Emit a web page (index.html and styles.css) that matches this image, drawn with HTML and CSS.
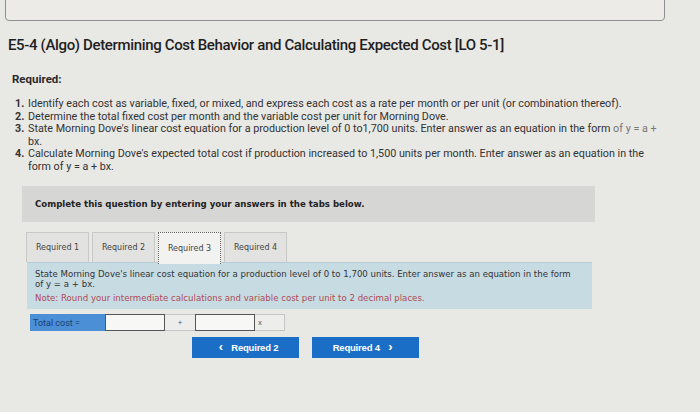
FILE: index.html
```html
<!DOCTYPE html>
<html>
<head>
<meta charset="utf-8">
<link rel="stylesheet" href="styles.css">
</head>
<body>
<div class="page">
  <div class="topbox"></div>
  <h1 class="title">E5-4 (Algo) Determining Cost Behavior and Calculating Expected Cost [LO 5-1]</h1>
  <p class="req">Required:</p>
  <ol class="steps">
    <li><b>1.</b><span>Identify each cost as variable, fixed, or mixed, and express each cost as a rate per month or per unit (or combination thereof).</span></li>
    <li><b>2.</b><span>Determine the total fixed cost per month and the variable cost per unit for Morning Dove.</span></li>
    <li><b>3.</b><span>State Morning Dove's linear cost equation for a production level of 0 to1,700 units. Enter answer as an equation in the form <i class="faint">of y = a +</i><br>bx.</span></li>
    <li><b>4.</b><span>Calculate Morning Dove's expected total cost if production increased to 1,500 units per month. Enter answer as an equation in the<br>form of y = a + bx.</span></li>
  </ol>
  <div class="instr">Complete this question by entering your answers in the tabs below.</div>
  <div class="tabs">
    <div class="tab">Required 1</div>
    <div class="tab">Required 2</div>
    <div class="tab active">Required 3</div>
    <div class="tab">Required 4</div>
  </div>
  <div class="panel">
    <p>State Morning Dove's linear cost equation for a production level of 0 to 1,700 units. Enter answer as an equation in the form<br>of y = a + bx.</p>
    <p class="note">Note: Round your intermediate calculations and variable cost per unit to 2 decimal places.</p>
  </div>
  <div class="answer">
    <div class="label">Total cost =</div>
    <div class="input"></div>
    <div class="op">+</div>
    <div class="input"></div>
    <div class="op x">x</div>
  </div>
  <div class="nav">
    <button class="btn"><span class="chev">&lsaquo;</span> Required 2</button>
    <button class="btn">Required 4 <span class="chev">&rsaquo;</span></button>
  </div>
</div>
</body>
</html>
```
FILE: styles.css
```css
html, body {
  margin: 0;
  padding: 0;
}
body {
  background: #e8e8e5;
  width: 700px;
  height: 412px;
  overflow: hidden;
  font-family: Roboto, "Liberation Sans", sans-serif;
  color: #2a2a2a;
}
.topbox {
  margin: -10px 35px 0 5px;
  height: 29px;
  border: 1px solid #8f8f93;
  border-radius: 4px;
  background: #ecebe8;
}
.title {
  margin: 15px 0 0 8px;
  font-size: 15px;
  font-weight: 500;
  letter-spacing: -0.35px;
  color: #1f1f22;
  line-height: 18px;
}
.req {
  margin: 18px 0 0 12px;
  font-size: 11.5px;
  font-weight: 700;
  color: #2a2a2a;
}
.steps {
  list-style: none;
  margin: 12px 0 0 15px;
  padding: 0;
  font-size: 10.75px;
  line-height: 12.5px;
  color: #333;
}
.steps li {
  display: flex;
  gap: 3px;
}
.steps b {
  width: 10px;
  flex: none;
}
.faint {
  font-style: normal;
  color: #777;
}
.instr {
  margin: 13px 105px 0 22px;
  height: 36px;
  background: #d6d6d4;
  display: flex;
  align-items: center;
  padding-left: 13px;
  font-family: "DejaVu Sans", Verdana, sans-serif;
  font-weight: 700;
  font-size: 8.6px;
  color: #222;
}
.tabs {
  display: flex;
  gap: 3px;
  margin: 10px 0 0 26px;
  height: 30px;
}
.tab {
  width: 61px;
  background: #e2e2e0;
  border: 1px solid #c8c8c6;
  border-bottom: none;
  display: flex;
  align-items: center;
  justify-content: center;
  font-family: "DejaVu Sans", Verdana, sans-serif;
  font-size: 8px;
  color: #444;
}
.tab.active {
  background: #f2f2f0;
  border: 1px dotted #666;
  border-bottom: none;
  height: 31px;
  position: relative;
  z-index: 1;
}
.panel {
  margin: 0 108px 0 27px;
  background: #c7dbe3;
  border-top: 1px solid #b8ccd5;
  padding: 6px 8px 6px 8px;
  font-family: "DejaVu Sans", Verdana, sans-serif;
  font-size: 8.6px;
  line-height: 10px;
  color: #333;
}
.panel p {
  margin: 0;
}
.panel .note {
  margin-top: 4px;
  color: #b04a55;
}
.answer {
  display: flex;
  margin: 5px 0 0 30px;
  height: 17px;
}
.label {
  width: 75px;
  background: #4b8fd6;
  color: #1d3f70;
  font-size: 9px;
  display: flex;
  align-items: center;
  padding-left: 3px;
  box-sizing: border-box;
}
.input {
  width: 60px;
  background: #f7f7f5;
  border: 1px solid #555;
  box-sizing: border-box;
}
.op {
  width: 30px;
  background: #ededeb;
  border: 1px solid #c6c6c4;
  border-left: none;
  border-right: none;
  box-sizing: border-box;
  display: flex;
  align-items: center;
  justify-content: center;
  font-size: 8px;
  color: #666;
}
.op.x {
  border-right: 1px solid #c6c6c4;
  justify-content: flex-start;
  padding-left: 3px;
}
.nav {
  display: flex;
  gap: 13px;
  margin: 6px 0 0 192px;
}
.btn {
  width: 107px;
  height: 21px;
  border: none;
  background: #1a6ec6;
  color: #fff;
  font-family: "Liberation Sans", Arial, sans-serif;
  font-weight: 700;
  font-size: 9.5px;
  letter-spacing: -0.2px;
  padding: 0;
}
.chev {
  margin: 0 6px;
  font-size: 13px;
  line-height: 10px;
}
```
